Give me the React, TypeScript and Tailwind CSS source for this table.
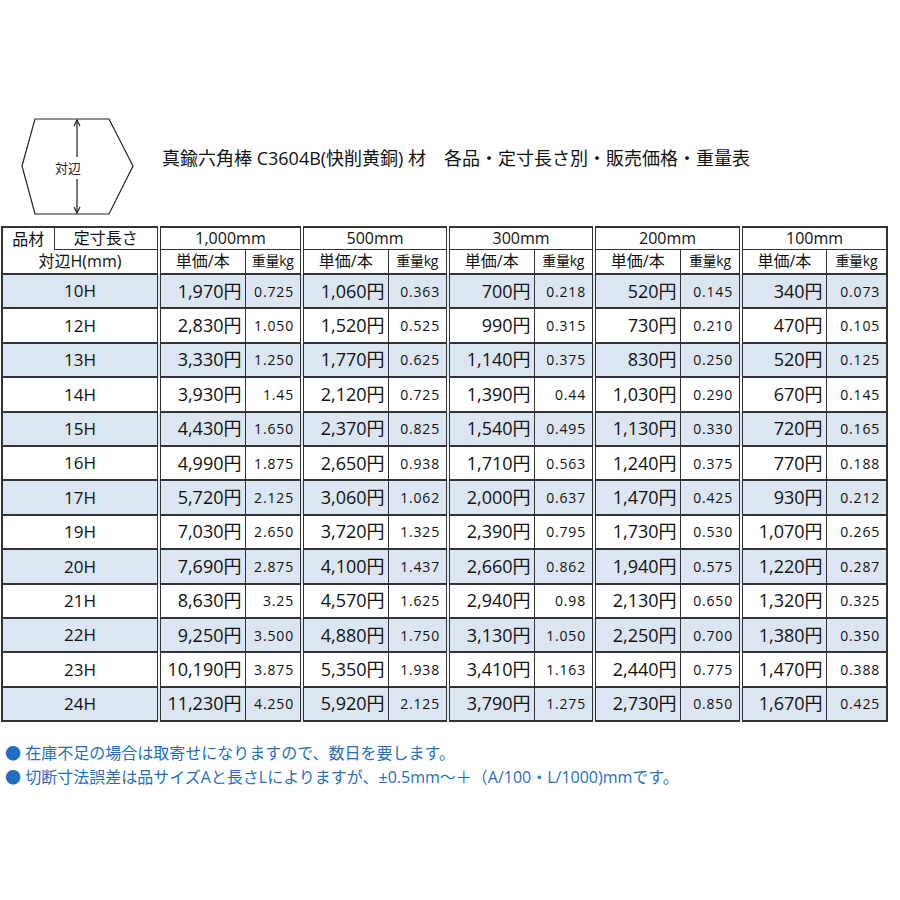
import React from 'react';

const rows: string[][] = [
  ['10H', '1,970', '0.725', '1,060', '0.363', '700', '0.218', '520', '0.145', '340', '0.073'],
  ['12H', '2,830', '1.050', '1,520', '0.525', '990', '0.315', '730', '0.210', '470', '0.105'],
  ['13H', '3,330', '1.250', '1,770', '0.625', '1,140', '0.375', '830', '0.250', '520', '0.125'],
  ['14H', '3,930', '1.45', '2,120', '0.725', '1,390', '0.44', '1,030', '0.290', '670', '0.145'],
  ['15H', '4,430', '1.650', '2,370', '0.825', '1,540', '0.495', '1,130', '0.330', '720', '0.165'],
  ['16H', '4,990', '1.875', '2,650', '0.938', '1,710', '0.563', '1,240', '0.375', '770', '0.188'],
  ['17H', '5,720', '2.125', '3,060', '1.062', '2,000', '0.637', '1,470', '0.425', '930', '0.212'],
  ['19H', '7,030', '2.650', '3,720', '1.325', '2,390', '0.795', '1,730', '0.530', '1,070', '0.265'],
  ['20H', '7,690', '2.875', '4,100', '1.437', '2,660', '0.862', '1,940', '0.575', '1,220', '0.287'],
  ['21H', '8,630', '3.25', '4,570', '1.625', '2,940', '0.98', '2,130', '0.650', '1,320', '0.325'],
  ['22H', '9,250', '3.500', '4,880', '1.750', '3,130', '1.050', '2,250', '0.700', '1,380', '0.350'],
  ['23H', '10,190', '3.875', '5,350', '1.938', '3,410', '1.163', '2,440', '0.775', '1,470', '0.388'],
  ['24H', '11,230', '4.250', '5,920', '2.125', '3,790', '1.275', '2,730', '0.850', '1,670', '0.425'],
];

const lengths = ['1,000mm', '500mm', '300mm', '200mm', '100mm'];
const colWidths = [52, 105, 86, 57, 86, 60, 86, 60, 86, 61, 85, 61];

function Hexagon() {
  return (
    <div className="relative w-[116px] h-[100px]">
      <svg width="116" height="100" viewBox="0 0 116 100" fill="none" stroke="#222" strokeWidth="1.2">
        <polygon points="15,2 89,2 113,49 89,97 15,97 2,49" />
        <line x1="57" y1="3" x2="57" y2="40" />
        <line x1="57" y1="62" x2="57" y2="96" />
        <polyline points="54,9 57,3 60,9" />
        <polyline points="54,90 57,96 60,90" />
      </svg>
      <span className="absolute left-[35px] top-[42px] text-[13px] leading-[18px] text-[#222]">対辺</span>
    </div>
  );
}

export default function App() {
  return (
    <div className="w-[900px] h-[900px] bg-white text-[#111] font-['Open_Sans','Noto_Sans_CJK_JP',sans-serif]">
      <div className="flex items-start pt-[117px] pl-[20px]">
        <Hexagon />
        <h1 className="ml-[26px] mt-[29px] text-[18px] leading-[24px] font-normal whitespace-nowrap">
          真鍮六角棒 C3604B(快削黄銅) 材　各品・定寸長さ別・販売価格・重量表
        </h1>
      </div>

      <table className="mt-[9px] ml-px w-[885px] table-fixed border-collapse border-2 border-[#333]">
        <colgroup>
          {colWidths.map((w, i) => (
            <col key={i} style={{ width: w }} />
          ))}
        </colgroup>
        <thead>
          <tr className="h-[22px] text-[16px] leading-[20px]">
            <th className="border-r border-t border-b-0 border-[#333] font-normal text-center">品材</th>
            <th className="border border-[#333] font-normal text-center">定寸長さ</th>
            {lengths.map((l) => (
              <th key={l} colSpan={2} className="border border-[#333] border-l-4 border-double font-normal text-center">
                {l}
              </th>
            ))}
          </tr>
          <tr className="h-[25px] leading-[20px]">
            <th colSpan={2} className="border-x border-t-0 border-b-2 border-[#333] font-normal text-center text-[16px]">
              対辺H(mm)
            </th>
            {lengths.map((l) => (
              <React.Fragment key={l}>
                <th className="border border-b-2 border-[#333] border-l-4 border-double font-normal text-center text-[16px]">
                  単価/本
                </th>
                <th className="border border-b-2 border-[#333] font-normal text-center text-[14px] tracking-[-0.02em]">
                  重量kg
                </th>
              </React.Fragment>
            ))}
          </tr>
        </thead>
        <tbody>
          {rows.map((r, i) => (
            <tr key={r[0]} className={i % 2 === 0 ? 'h-[34.4px] bg-[#dce6f2]' : 'h-[34.4px] bg-white'}>
              <td colSpan={2} className="border-x border-b-2 border-[#333] text-center text-[17px]">
                {r[0]}
              </td>
              {[0, 1, 2, 3, 4].map((g) => (
                <React.Fragment key={g}>
                  <td className="border border-b-2 border-[#333] border-l-4 border-double text-right pr-[3px] text-[18px] whitespace-nowrap">
                    {r[1 + g * 2]}円
                  </td>
                  <td className="border border-b-2 border-[#333] text-right pr-[6px] text-[14px] tracking-[0.06em]">
                    {r[2 + g * 2]}
                  </td>
                </React.Fragment>
              ))}
            </tr>
          ))}
        </tbody>
      </table>

      <div className="mt-[19px] pl-[5px] text-[16px] leading-[24px] text-[#1f6fc0]">
        <p>● 在庫不足の場合は取寄せになりますので、数日を要します。</p>
        <p>● 切断寸法誤差は品サイズAと長さLによりますが、±0.5mm～＋（A/100・L/1000)mmです。</p>
      </div>
    </div>
  );
}
